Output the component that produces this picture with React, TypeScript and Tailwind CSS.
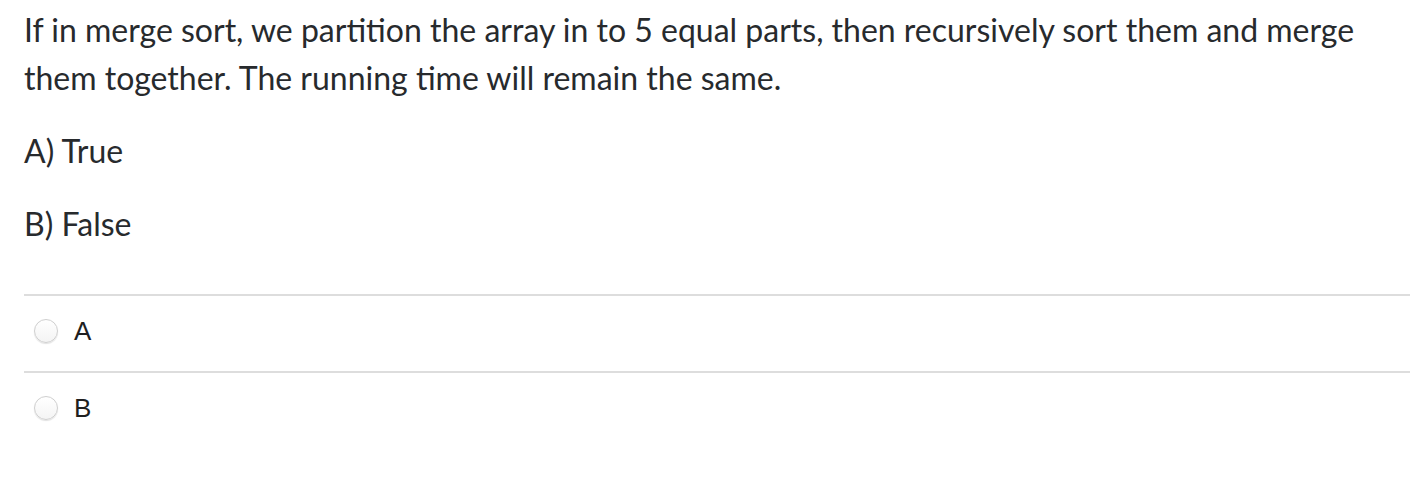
import { useState } from 'react';

const answers = ['A', 'B'];

export default function App() {
  const [picked, setPicked] = useState<string | null>(null);

  return (
    <div className="min-h-screen bg-white pl-6 pt-[6px] text-[#272a2d]">
      {/* Question */}
      <div className="font-['Lato','Noto_Sans',sans-serif] text-[32px] leading-[48px]">
        <p>
          If in merge sort, we partition the array in to 5 equal parts, then recursively sort them and merge them
          together. The running time will remain the same.
        </p>
        <p className="mt-[25px]">A) True</p>
        <p className="mt-[25px]">B) False</p>
      </div>

      {/* Answers */}
      <div className="mt-[46px]">
        {answers.map((a) => (
          <label
            key={a}
            className="flex h-[77px] cursor-pointer items-center border-t-2 border-[#dddddd] pb-[6px] pl-[10px]"
            onClick={() => setPicked(a)}
          >
            <span className="flex h-6 w-6 items-center justify-center rounded-full border border-[#cfcfcf] bg-gradient-to-b from-white to-[#f4f4f4] shadow-[0_1px_1px_rgba(0,0,0,0.12)]">
              {picked === a && <span className="h-2.5 w-2.5 rounded-full bg-[#2d3b45]" />}
            </span>
            <span className="ml-4 font-['Liberation_Sans',Arial,sans-serif] text-[26px] leading-none text-[#1f1f1f]">
              {a}
            </span>
          </label>
        ))}
      </div>
    </div>
  );
}
